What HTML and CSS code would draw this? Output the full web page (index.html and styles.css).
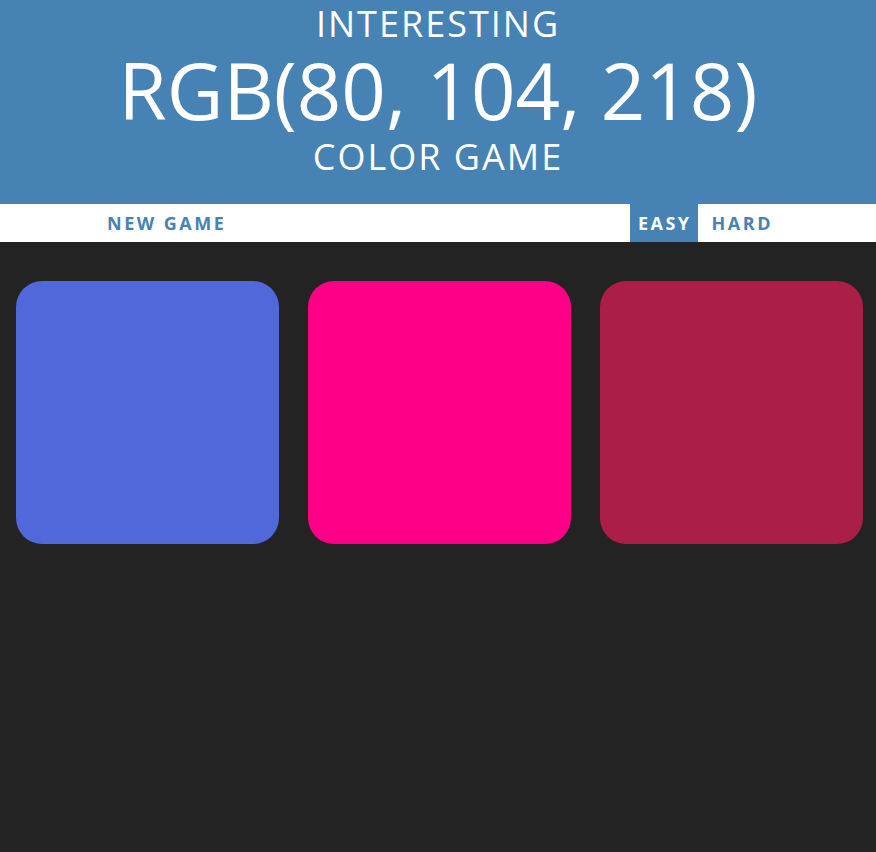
FILE: index.html
```html
<!DOCTYPE html>
<html lang="en">
  <head>
    <meta charset="UTF-8" />
    <meta name="viewport" content="width=device-width, initial-scale=1.0" />
    <title>Color Game</title>
    <link rel="stylesheet" href="styles.css">
  </head>
  <body>
    <!-- Title with the colour to guess -->
    <h1 class="title">
      <span class="title-small">Interesting</span>
      <span class="title-rgb" id="colorDisplay">RGB(80, 104, 218)</span>
      <span class="title-small">Color Game</span>
    </h1>

    <!-- Controls bar -->
    <div class="stripe">
      <button class="stripe-btn" id="reset">New Game</button>
      <span class="message" id="message"></span>
      <button class="stripe-btn mode selected">Easy</button>
      <button class="stripe-btn mode">Hard</button>
    </div>

    <!-- Colour squares -->
    <div class="squares">
      <div class="square" style="background-color: rgb(80, 104, 218)"></div>
      <div class="square" style="background-color: rgb(254, 0, 136)"></div>
      <div class="square" style="background-color: rgb(170, 30, 71)"></div>
    </div>
  </body>
</html>
```

FILE: styles.css
```css
/* Colour guessing game */
body {
  margin: 0;
  background-color: #232323;
  font-family: "Open Sans", sans-serif;
}
.title {
  margin: 0;
  padding: 2px 0 25px;
  background-color: steelblue;
  color: #fff;
  text-align: center;
  font-weight: normal;
  text-transform: uppercase;
}
.title-small {
  display: block;
  font-size: 36px;
  line-height: 44px;
  letter-spacing: 2px;
}
.title-rgb {
  display: block;
  font-size: 78px;
  line-height: 89px;
}
.stripe {
  display: flex;
  align-items: stretch;
  height: 38px;
  padding: 0 97px 0 99px;
  background-color: #fff;
}
.message {
  flex: 1;
}
.stripe-btn {
  padding: 0 6px 0 8px;
  border: none;
  background: none;
  color: steelblue;
  font-family: "Open Sans", sans-serif;
  font-size: 18px;
  font-weight: 700;
  letter-spacing: 2.5px;
  text-transform: uppercase;
  cursor: pointer;
}
.mode {
  margin-left: 6px;
}
.selected {
  color: #fff;
  background-color: steelblue;
}
.squares {
  display: grid;
  grid-template-columns: repeat(3, 263px);
  gap: 29px;
  padding: 39px 14px 0 16px;
}
.square {
  height: 263px;
  border-radius: 26px;
}
```
